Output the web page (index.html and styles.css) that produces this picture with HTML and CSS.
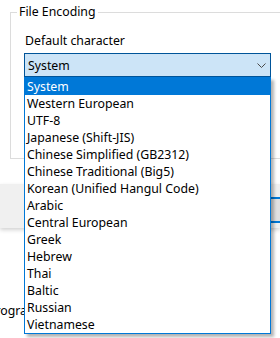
FILE: index.html
```html
<!DOCTYPE html>
<html>
<head>
<meta charset="utf-8">
<link rel="stylesheet" href="styles.css">
</head>
<body>
<div class="page">
  <fieldset class="group">
    <legend class="group-title">File Encoding</legend>
    <div class="label">Default character</div>
    <div class="combo">
      <span class="combo-value">System</span>
      <svg class="chev" width="9" height="5" viewBox="0 0 9 5"><path d="M0.5 0.5 L4.5 4.5 L8.5 0.5" fill="none" stroke="#4a4a4a" stroke-width="1"/></svg>
    </div>
  </fieldset>
  <div class="band">
    <div class="band-button"></div>
  </div>
  <div class="footer-clip"><span class="footer-text">Program</span></div>

  <ul class="dropdown">
    <li class="item selected">System</li>
    <li class="item">Western European</li>
    <li class="item">UTF-8</li>
    <li class="item">Japanese (Shift-JIS)</li>
    <li class="item">Chinese Simplified (GB2312)</li>
    <li class="item">Chinese Traditional (Big5)</li>
    <li class="item">Korean (Unified Hangul Code)</li>
    <li class="item">Arabic</li>
    <li class="item">Central European</li>
    <li class="item">Greek</li>
    <li class="item">Hebrew</li>
    <li class="item">Thai</li>
    <li class="item">Baltic</li>
    <li class="item">Russian</li>
    <li class="item">Vietnamese</li>
  </ul>
</div>
</body>
</html>
```

FILE: styles.css
```css
html, body {
  margin: 0;
  padding: 0;
  background: #ffffff;
}
body {
  width: 280px;
  height: 338px;
  overflow: hidden;
  font-family: "Noto Sans", "DejaVu Sans", sans-serif;
  font-size: 12.3px;
  line-height: 16px;
  color: #000;
}
.page {
  position: relative;
  width: 280px;
  height: 338px;
  overflow: hidden;
}
.group {
  margin: 4px 0 0 10px;
  width: 300px;
  padding: 0 0 81px 0;
  border: 1px solid #dcdcdc;
  box-sizing: content-box;
  min-inline-size: 0;
}
.group-title {
  margin-left: 6px;
  padding: 0 2px;
  line-height: 16px;
}
.label {
  margin: 13px 0 0 14px;
  height: 16px;
}
.combo {
  margin: 4px 0 0 13px;
  width: 247px;
  height: 24px;
  box-sizing: border-box;
  border: 1px solid #005499;
  background: #cce4f7;
  display: flex;
  align-items: center;
  justify-content: space-between;
  padding: 0 4px 0 3px;
}
.combo-value {
  padding-top: 1px;
}
.chev {
  display: block;
  margin-top: 1px;
}
.band {
  margin-top: 25px;
  height: 44px;
  background: #f0f0f0;
  box-shadow: 0 2px 4px rgba(0,0,0,0.18);
  display: flex;
  justify-content: flex-end;
  padding-top: 13px;
  box-sizing: border-box;
}
.band-button {
  width: 60px;
  height: 26px;
  margin-right: -20px;
  box-sizing: border-box;
  border: 2px solid #0078d7;
  background: #e1e1e1;
}
.footer-clip {
  margin-top: 75px;
  width: 24px;
  overflow: hidden;
  white-space: nowrap;
}
.footer-text {
  display: inline-block;
  margin-left: -12px;
}
.dropdown {
  position: absolute;
  left: 24px;
  top: 77px;
  width: 247px;
  margin: 0;
  padding: 0;
  list-style: none;
  box-sizing: border-box;
  border: 1px solid #0078d7;
  background: #fff;
  box-shadow: 3px 3px 3px rgba(0,0,0,0.3);
}
.item {
  height: 17px;
  line-height: 18px;
  padding-left: 2px;
  white-space: nowrap;
}
.item.selected {
  background: #0078d7;
  color: #fff;
}
```
